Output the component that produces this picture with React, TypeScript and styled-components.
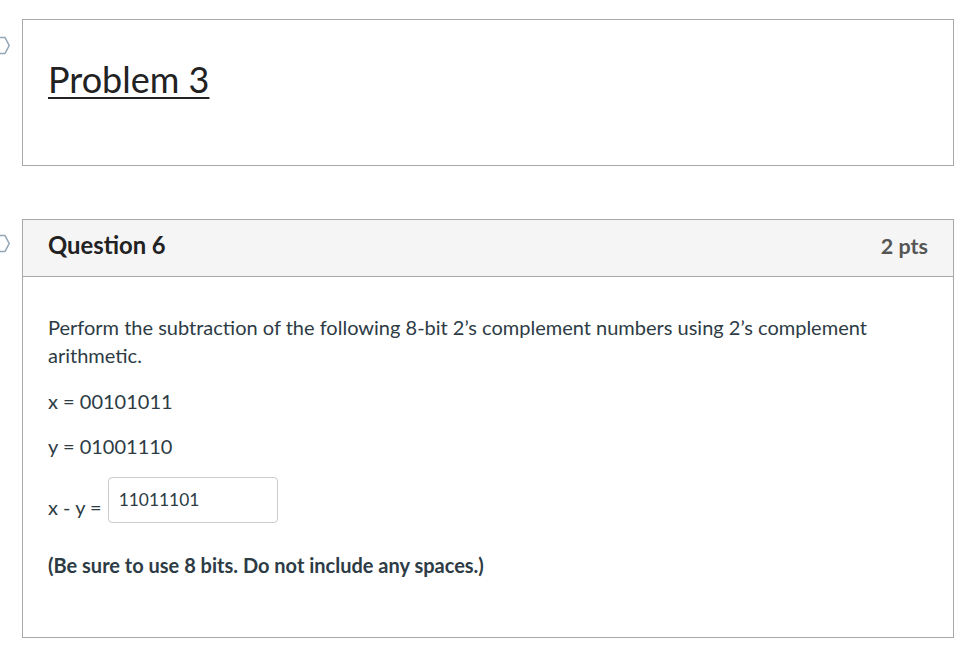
import React from 'react';
import styled, { createGlobalStyle } from 'styled-components';

const GlobalStyle = createGlobalStyle`
	body {
		margin: 0;
		background: #ffffff;
		font-family: Lato, 'Noto Sans', sans-serif;
		color: #2d3b45;
	}
`;

const FlagIcon = () => (
	<svg width='12' height='20' viewBox='0 0 12 20'>
		<path d='M-1 1.5 H5 L9.2 9.5 L5 17.5 H-1' fill='none' stroke='#93a6b7' strokeWidth='1.6' strokeLinejoin='round' />
	</svg>
);

const App = () => {
	return (
		<Page>
			<GlobalStyle />
			<Row>
				<Gutter>
					<FlagIcon />
				</Gutter>
				<Card>
					<ProblemBody>
						<ProblemTitle>Problem 3</ProblemTitle>
					</ProblemBody>
				</Card>
			</Row>
			<Row>
				<Gutter $top={15}>
					<FlagIcon />
				</Gutter>
				<Card>
					<Header>
						<QuestionName>Question 6</QuestionName>
						<Points>2 pts</Points>
					</Header>
					<QuestionBody>
						<Para>
							Perform the subtraction of the following 8-bit 2’s complement numbers using 2’s complement
							arithmetic.
						</Para>
						<Para>x = 00101011</Para>
						<Para>y = 01001110</Para>
						<AnswerRow>
							<AnswerLabel>x - y =</AnswerLabel>
							<AnswerInput type='text' defaultValue='11011101' />
						</AnswerRow>
						<Note>(Be sure to use 8 bits. Do not include any spaces.)</Note>
					</QuestionBody>
				</Card>
			</Row>
		</Page>
	);
};

const Page = styled.div`
	padding: 19px 6px 0 0;
`;

const Row = styled.div`
	display: flex;
	flex-direction: row;
	align-items: flex-start;
	margin-bottom: 53px;
`;

const Gutter = styled.div<{ $top?: number }>`
	flex: none;
	width: 22px;
	padding-top: ${(props) => props.$top ?? 17}px;
	svg {
		display: block;
	}
`;

const Card = styled.div`
	flex: 1;
	border: 1px solid #a9a9a9;
	background: #ffffff;
`;

const ProblemBody = styled.div`
	padding: 38px 25px 64px;
`;

const ProblemTitle = styled.h2`
	margin: 0;
	font-size: 36px;
	font-weight: 400;
	line-height: 1.2;
	color: #222222;
	text-decoration: underline;
	text-decoration-thickness: 2px;
	text-underline-offset: 4px;
	display: inline-block;
`;

const Header = styled.div`
	display: flex;
	flex-direction: row;
	justify-content: space-between;
	align-items: baseline;
	box-sizing: border-box;
	height: 57px;
	padding: 11px 25px 0;
	background: #f5f5f5;
	border-bottom: 1px solid #a9a9a9;
`;

const QuestionName = styled.div`
	font-size: 23.8px;
	font-weight: 700;
	line-height: 28.8px;
	color: #222222;
`;

const Points = styled.div`
	font-size: 21.5px;
	font-weight: 700;
	line-height: 28.8px;
	color: #555555;
`;

const QuestionBody = styled.div`
	padding: 35.5px 25px 57px;
	font-size: 20px;
	line-height: 28.8px;
	color: #2d3b45;
`;

const Para = styled.p`
	margin: 0 0 16.5px;
`;

const AnswerRow = styled.div`
	display: flex;
	flex-direction: row;
	align-items: flex-end;
	gap: 6px;
	margin: 1px 0 28px;
`;

const AnswerLabel = styled.span`
	margin-bottom: 2px;
`;

const AnswerInput = styled.input`
	box-sizing: border-box;
	width: 170px;
	height: 46px;
	padding: 0 10px 2px;
	border: 1px solid #c7cdd1;
	border-radius: 4px;
	font-family: Lato, 'Noto Sans', sans-serif;
	font-size: 17.4px;
	color: #2d3b45;
	background: #ffffff;
	outline: none;
`;

const Note = styled.p`
	margin: 0;
	font-weight: 700;
`;

export default App;
